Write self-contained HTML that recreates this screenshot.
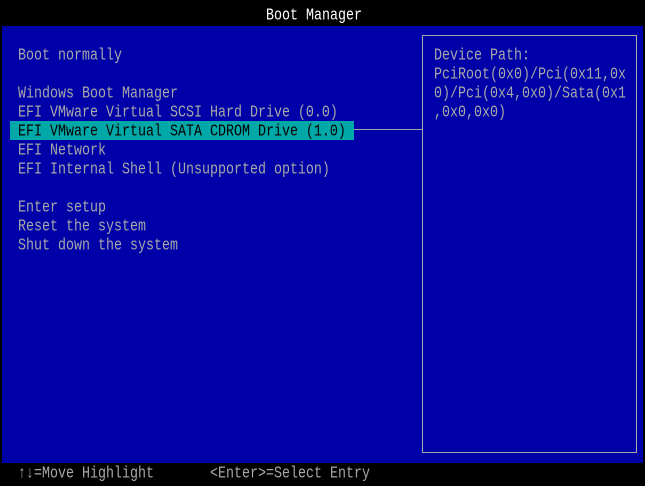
<!DOCTYPE html>
<html><head><style>
body{margin:0;width:645px;height:484px;background:#000;position:relative;overflow:hidden;font-family:"Liberation Mono","DejaVu Sans Mono",monospace;font-size:13.33px;color:#a8a8a8}
.blue{position:absolute;left:2px;top:26px;width:641px;height:437px;background:#0000a8}
.t{position:absolute;height:19px;line-height:19px;white-space:pre;transform:scaleY(1.25);transform-origin:0 50%}
.hl{position:absolute;left:10px;top:121px;width:344px;height:19px;background:#00a8a8}
.box{position:absolute;left:422px;top:35px;width:213px;height:416px;border:1px solid #a8a8a8}
.line{position:absolute;left:354px;top:129px;width:68px;height:1px;background:#a8a8a8}
</style></head><body>
<div class="blue"></div>
<div class="t" style="left:266px;top:7px;color:#fff">Boot Manager</div>
<div class="hl"></div>
<div class="line"></div>
<div class="box"></div>
<div class="t" style="left:18px;top:47px">Boot normally</div>
<div class="t" style="left:18px;top:85px">Windows Boot Manager</div>
<div class="t" style="left:18px;top:104px">EFI VMware Virtual SCSI Hard Drive (0.0)</div>
<div class="t" style="left:18px;top:123px;color:#000">EFI VMware Virtual SATA CDROM Drive (1.0)</div>
<div class="t" style="left:18px;top:142px">EFI Network</div>
<div class="t" style="left:18px;top:161px">EFI Internal Shell (Unsupported option)</div>
<div class="t" style="left:18px;top:199px">Enter setup</div>
<div class="t" style="left:18px;top:218px">Reset the system</div>
<div class="t" style="left:18px;top:237px">Shut down the system</div>
<div class="t" style="left:434px;top:47px">Device Path:</div>
<div class="t" style="left:434px;top:66px">PciRoot(0x0)/Pci(0x11,0x</div>
<div class="t" style="left:434px;top:85px">0)/Pci(0x4,0x0)/Sata(0x1</div>
<div class="t" style="left:434px;top:104px">,0x0,0x0)</div>
<div class="t" style="left:18px;top:465px">↑↓=Move Highlight</div>
<div class="t" style="left:210px;top:465px">&lt;Enter&gt;=Select Entry</div>
</body></html>
